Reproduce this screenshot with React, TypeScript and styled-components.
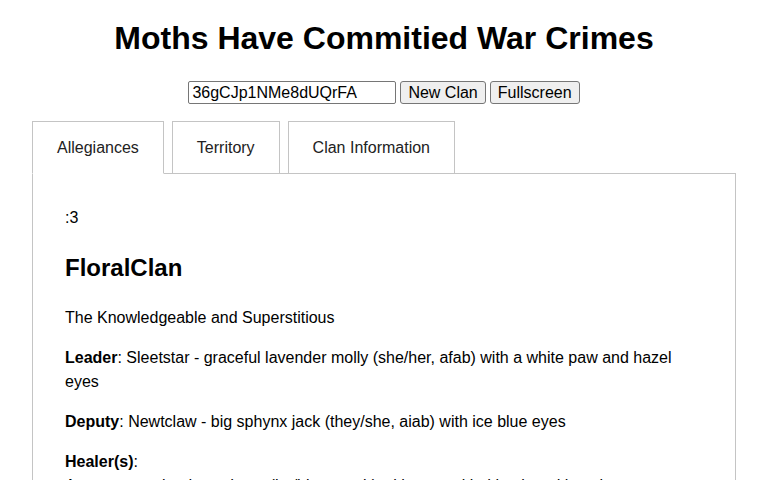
import { useState } from 'react';
import styled, { createGlobalStyle } from 'styled-components';

const GlobalStyle = createGlobalStyle`
  body {
    margin: 0;
    background: #fff;
    color: #000;
    font-family: "Liberation Sans", Arial, sans-serif;
  }
`;

const Page = styled.div`
  padding: 20px 32px 32px;
`;

const Title = styled.h1`
  margin: 0;
  font-size: 32px;
  line-height: 37px;
  font-weight: 700;
  text-align: center;
`;

const Controls = styled.div`
  display: flex;
  justify-content: center;
  align-items: center;
  gap: 4px;
  margin-top: 24px;
  height: 23px;
`;

const SeedInput = styled.input`
  box-sizing: border-box;
  width: 208px;
  height: 23px;
  padding: 1px 3px;
  border: 1px solid #767676;
  border-radius: 2px;
  font-family: "Liberation Sans", Arial, sans-serif;
  font-size: 16px;
  color: #000;
`;

const Button = styled.button`
  box-sizing: border-box;
  height: 23px;
  padding: 0 7px;
  background: #efefef;
  border: 1px solid #767676;
  border-radius: 3px;
  font-family: "Liberation Sans", Arial, sans-serif;
  font-size: 16px;
  color: #000;
`;

const TabList = styled.div`
  display: flex;
  gap: 8px;
  margin-top: 17px;
  margin-bottom: -1px;
  position: relative;
  z-index: 1;
`;

const Tab = styled.button<{ $active?: boolean }>`
  padding: 16px 24px;
  line-height: 19px;
  background: #fff;
  border: 1px solid #c4c4c4;
  border-bottom-color: ${({ $active }) => ($active ? '#fff' : '#c4c4c4')};
  font-family: "Liberation Sans", Arial, sans-serif;
  font-size: 16px;
  color: #222;
  cursor: pointer;
`;

const Panel = styled.div`
  border: 1px solid #c4c4c4;
  padding: 32px;
`;

const Para = styled.p`
  margin: 16px 0;
  font-size: 16px;
  line-height: 24px;

  &:first-child {
    margin-top: 0;
  }
`;

const ClanName = styled.h2`
  margin: 20px 0;
  font-size: 24px;
  line-height: 36px;
  font-weight: 700;
`;

const tabs = ['Allegiances', 'Territory', 'Clan Information'];

export default function App() {
  const [active, setActive] = useState(0);

  return (
    <Page>
      <GlobalStyle />
      <Title>Moths Have Commitied War Crimes</Title>
      <Controls>
        <SeedInput defaultValue="36gCJp1NMe8dUQrFA" />
        <Button>New Clan</Button>
        <Button>Fullscreen</Button>
      </Controls>

      <TabList>
        {tabs.map((t, i) => (
          <Tab key={t} $active={i === active} onClick={() => setActive(i)}>
            {t}
          </Tab>
        ))}
      </TabList>

      <Panel>
        <Para>:3</Para>
        <ClanName>FloralClan</ClanName>
        <Para>The Knowledgeable and Superstitious</Para>
        <Para>
          <strong>Leader</strong>: Sleetstar - graceful lavender molly (she/her, afab) with a white paw and hazel eyes
        </Para>
        <Para>
          <strong>Deputy</strong>: Newtclaw - big sphynx jack (they/she, aiab) with ice blue eyes
        </Para>
        <Para>
          <strong>Healer(s)</strong>:
          <br />
          Aspenpaw - slender red tom (he/him, amab) with a speckled back and hazel eyes
        </Para>
      </Panel>
    </Page>
  );
}
